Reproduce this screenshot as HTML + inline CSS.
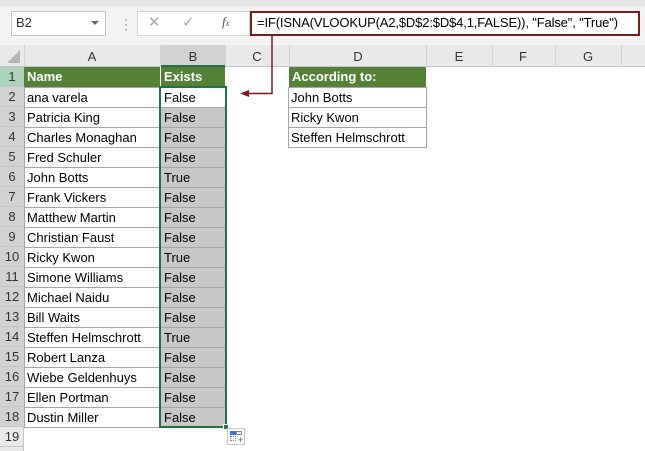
<!DOCTYPE html>
<html><head><style>
body{margin:0;width:645px;height:451px;overflow:hidden;background:#fff;font-family:"Liberation Sans",Arial,sans-serif;position:relative}
.a{position:absolute;box-sizing:border-box}
.t{font-size:13px;line-height:20px;white-space:nowrap}
</style></head><body>
<div class="a" style="left:0;top:0;width:645px;height:46px;background:#f3f3f3"></div>
<div class="a" style="left:0;top:0;width:645px;height:6px;background:#e6e6e6"></div>
<div class="a" style="left:11px;top:11px;width:95px;height:25px;background:#fff;border:1px solid #c6c6c6"></div>
<div class="a t" style="left:16px;top:13px;color:#333">B2</div>
<div class="a" style="left:91px;top:21px;width:0;height:0;border-left:4px solid transparent;border-right:4px solid transparent;border-top:4px solid #666"></div>
<div class="a" style="left:119px;top:16px;color:#999;font-size:14px">⋮</div>
<div class="a" style="left:137px;top:11px;width:113px;height:25px;background:#fff;border:1px solid #d4d4d4"></div>
<div class="a t" style="left:148px;top:13px;color:#aaa;font-size:15px">✕</div>
<div class="a t" style="left:182px;top:13px;color:#aaa;font-size:15px">✓</div>
<div class="a t" style="left:222px;top:12px;color:#555;font-family:'Liberation Serif',serif;font-style:italic">f<span style="font-size:9px">x</span></div>
<div class="a" style="left:250px;top:11px;width:390px;height:25px;background:#fff;border:2px solid #7b1c1c"></div>
<div class="a t" style="left:257px;top:13px;font-size:13px;letter-spacing:-0.15px;color:#000">=IF(ISNA(VLOOKUP(A2,$D$2:$D$4,1,FALSE)), "False", "True")</div>
<div class="a" style="left:0;top:45px;width:645px;height:22px;background:#e9e9e9;border-bottom:1px solid #c6c6c6"></div>
<div class="a" style="left:0;top:67px;width:24px;height:384px;background:#e9e9e9;border-right:1px solid #c6c6c6"></div>
<div class="a" style="left:160px;top:45px;width:65px;height:22px;background:#d2d2d2;border-bottom:2px solid #217346"></div>
<div class="a" style="left:0;top:67px;width:24px;height:360px;background:#d2d2d2"></div>
<div class="a" style="left:0;top:67px;width:24px;height:20px;background:#a9d4b9"></div>
<svg class="a" style="left:0;top:0" width="645" height="451">
<g stroke="#d4d4d4" stroke-width="1">
<line x1="24.5" y1="45" x2="24.5" y2="67"/><line x1="160.5" y1="45" x2="160.5" y2="67"/><line x1="225.5" y1="45" x2="225.5" y2="67"/><line x1="289.5" y1="45" x2="289.5" y2="67"/><line x1="426.5" y1="45" x2="426.5" y2="67"/><line x1="492.5" y1="45" x2="492.5" y2="67"/><line x1="555.5" y1="45" x2="555.5" y2="67"/><line x1="621.5" y1="45" x2="621.5" y2="67"/>
</g>
<polygon points="20,50 20,63 7,63" fill="#b5b5b5"/>
<g font-family="Liberation Sans" font-size="13" fill="#333" text-anchor="middle">
<text x="92" y="61">A</text><text x="193" y="61">B</text><text x="257" y="61">C</text><text x="358" y="61">D</text><text x="459" y="61">E</text><text x="523" y="61">F</text><text x="588" y="61">G</text>
</g>
</svg>
<div id="g"></div>
<script>
var names=["ana varela","Patricia King","Charles Monaghan","Fred Schuler","John Botts","Frank Vickers","Matthew Martin","Christian Faust","Ricky Kwon","Simone Williams","Michael Naidu","Bill Waits","Steffen Helmschrott","Robert Lanza","Wiebe Geldenhuys","Ellen Portman","Dustin Miller"];
var ex=["False","False","False","False","True","False","False","False","True","False","False","False","True","False","False","False","False"];
var h="";
for(var r=1;r<=19;r++){var y=67+(r-1)*20;
h+='<div class="a t" style="left:0;top:'+y+'px;width:24px;text-align:center;color:#333">'+r+'</div>';
h+='<div class="a" style="left:0;top:'+(y+19)+'px;width:24px;height:1px;background:#c6c6c6"></div>';}
h+='<div class="a t" style="left:24px;top:67px;width:136px;height:20px;background:#548235;color:#fff;font-weight:bold;padding-left:3px">Name</div>';
h+='<div class="a t" style="left:161px;top:67px;width:64px;height:20px;background:#548235;color:#fff;font-weight:bold;padding-left:3px">Exists</div>';
h+='<div class="a t" style="left:289px;top:67px;width:137px;height:20px;background:#548235;color:#fff;font-weight:bold;padding-left:3px">According to:</div>';
for(var i=0;i<17;i++){var y=87+i*20;
h+='<div class="a t" style="left:24px;top:'+y+'px;width:137px;height:21px;border:1px solid #a6a6a6;padding-left:2px;color:#000">'+names[i]+'</div>';
h+='<div class="a t" style="left:160px;top:'+y+'px;width:66px;height:21px;border:1px solid #a6a6a6;padding-left:3px;color:#000;background:'+(i?'#c8c8c8':'#fff')+'">'+ex[i]+'</div>';}
var d=["John Botts","Ricky Kwon","Steffen Helmschrott"];
for(var i=0;i<3;i++){h+='<div class="a t" style="left:288px;top:'+(87+i*20)+'px;width:139px;height:21px;border:1px solid #a6a6a6;padding-left:2px">'+d[i]+'</div>';}
h+='<div class="a" style="left:159px;top:86px;width:68px;height:342px;border:2px solid #217346"></div>';
h+='<div class="a" style="left:223px;top:424px;width:6px;height:6px;background:#217346;border:1px solid #fff"></div>';
h+='<div class="a" style="left:227px;top:428px;width:18px;height:17px;border:1px solid #c6c6c6;background:#fff"><div class="a" style="left:2px;top:2px;width:6px;height:4px;background:#3c78d8"></div><div class="a" style="left:8px;top:2px;width:6px;height:4px;border:1px solid #888"></div><div class="a" style="left:2px;top:7px;width:6px;height:5px;border:1px dotted #888"></div><div class="a" style="left:10px;top:7px;font-size:9px;line-height:8px;color:#555">+</div></div>';
h+='<svg class="a" style="left:0;top:0" width="645" height="451"><path d="M272 36 V93.5 H248" stroke="#7b1c1c" stroke-width="1.5" fill="none"/><polygon points="240,93.5 249,90 249,97" fill="#7b1c1c"/></svg>';
document.getElementById("g").innerHTML=h;
</script>
</body></html>
